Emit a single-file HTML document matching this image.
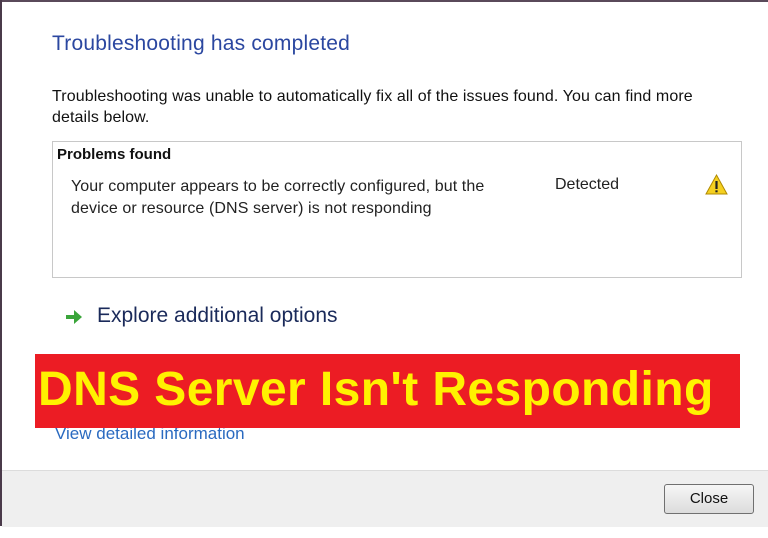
<!DOCTYPE html>
<html><head><style>
body{margin:0;width:768px;height:538px;background:#fff;position:relative;overflow:hidden;font-family:"Liberation Sans",sans-serif;}
.a{position:absolute;white-space:nowrap;}
</style></head><body>
<div class="a" style="left:0;top:0;width:768px;height:2px;background:#5a4a5a"></div>
<div class="a" style="left:0;top:0;width:2px;height:526px;background:#4a3a4a"></div>
<div class="a" style="left:52px;top:32px;font-size:21px;color:#2b47a0;letter-spacing:0.2px">Troubleshooting has completed</div>
<div class="a" style="left:52px;top:86px;font-size:16px;color:#111;line-height:21px;letter-spacing:0.1px">Troubleshooting was unable to automatically fix all of the issues found. You can find more<br>details below.</div>
<div class="a" style="left:52px;top:141px;width:688px;height:135px;border:1px solid #c8c8c8"></div>
<div class="a" style="left:57px;top:146px;font-size:15px;font-weight:bold;color:#111;">Problems found</div>
<div class="a" style="left:71px;top:176px;font-size:16px;color:#222;line-height:22px;letter-spacing:0.1px">Your computer appears to be correctly configured, but the<br>device or resource (DNS server) is not responding</div>
<div class="a" style="left:555px;top:176px;font-size:16px;color:#222;">Detected</div>
<svg class="a" style="left:705px;top:173px" width="23" height="23" viewBox="0 0 23 23"><path d="M11.5 2 L22 21 L1 21 Z" fill="#f5d020" stroke="#b08a00" stroke-width="1"/><rect x="10.4" y="8" width="2.2" height="8" fill="#222"/><rect x="10.4" y="17.3" width="2.2" height="2" fill="#222"/></svg>
<svg class="a" style="left:64px;top:308px" width="20" height="18" viewBox="0 0 20 18"><path d="M2 7 H10 V2 L18 9 L10 16 V11 H2 Z" fill="#3aa53a"/></svg>
<div class="a" style="left:97px;top:304px;font-size:21px;color:#1a2a5a;">Explore additional options</div>
<div class="a" style="left:55px;top:424px;font-size:17px;color:#2a6ac0;">View detailed information</div>
<div class="a" style="left:35px;top:354px;width:705px;height:74px;background:#ec1c24"></div>
<div class="a" style="left:38px;top:357px;font-size:48px;font-weight:bold;color:#fff200;letter-spacing:0.4px;line-height:66px">DNS Server Isn't Responding</div>
<div class="a" style="left:2px;top:470px;width:766px;height:56px;background:#efefef;border-top:1px solid #dcdcdc"></div>
<div class="a" style="left:664px;top:484px;width:88px;height:28px;border:1px solid #707070;border-radius:3px;background:linear-gradient(#f6f6f6,#dcdcdc);font-size:15px;color:#111;text-align:center;line-height:28px">Close</div>
</body></html>
